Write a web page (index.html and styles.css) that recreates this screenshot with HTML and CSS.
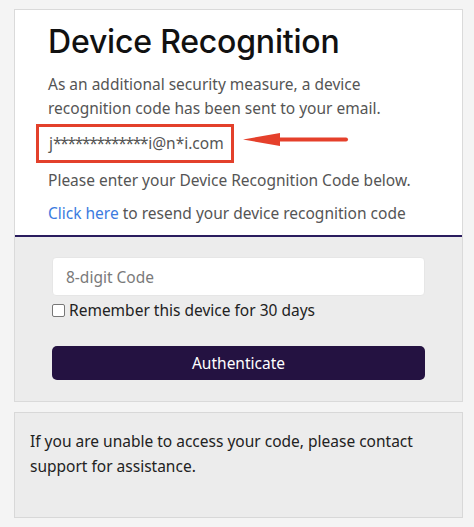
FILE: index.html
```html
<!DOCTYPE html>
<html lang="en">
<head>
<meta charset="utf-8">
<title>Device Recognition</title>
<link rel="stylesheet" href="styles.css">
</head>
<body>
<main class="page">
  <section class="card">
    <div class="card-top">
      <h1 class="title">Device Recognition</h1>
      <p class="text">As an additional security measure, a device recognition code has been sent to your email.</p>
      <div class="email-row">
        <div class="email-box">j<span class="stars">*************</span>i@n*i.com</div>
        <svg class="arrow" width="106" height="16" viewBox="0 0 106 16" aria-hidden="true">
          <path d="M0 7.5 L37 1 L37 14 Z" fill="#e5402b"/>
          <line x1="34" y1="7.5" x2="103" y2="7.5" stroke="#e5402b" stroke-width="4" stroke-linecap="round"/>
        </svg>
      </div>
      <p class="text">Please enter your Device Recognition Code below.</p>
      <p class="text resend"><a class="link" href="#">Click here</a> to resend your device recognition code</p>
    </div>
    <div class="card-bottom">
      <input class="code-input" type="text" placeholder="8-digit Code">
      <label class="remember"><span class="checkbox"></span>Remember this device for 30 days</label>
      <button class="btn" type="button">Authenticate</button>
    </div>
  </section>
  <section class="support">
    <p class="support-text">If you are unable to access your code, please contact support for assistance.</p>
  </section>
</main>
</body>
</html>
```

FILE: styles.css
```css
* { box-sizing: border-box; }
html, body { margin: 0; padding: 0; }
body {
  background: #f4f4f4;
  font-family: "Noto Sans", "Open Sans", sans-serif;
  width: 474px;
  height: 527px;
  overflow: hidden;
}
.page {
  padding: 9px 11px 0 14px;
}
.card {
  border: 1px solid #dadada;
  background: #fff;
}
.card-top {
  padding: 12px 20px 10px 33px;
}
.title {
  margin: 0 0 10px 0;
  font-family: Inter, "Noto Sans", sans-serif;
  font-size: 32px;
  font-weight: 500;
  color: #111;
  line-height: 40px;
  letter-spacing: -0.2px;
}
.text {
  margin: 0;
  font-size: 15.5px;
  line-height: 24px;
  color: #555;
}
.email-row {
  display: flex;
  align-items: center;
  margin: 4px 0 5px -12px;
}
.email-box {
  border: 3px solid #e3402b;
  padding: 4px 10px 5px 10px;
  width: 198px;
  font-size: 15.5px;
  line-height: 24px;
  color: #555;
  white-space: nowrap;
}
.stars { letter-spacing: -1.3px; margin-right: 1px; }
.arrow {
  margin-left: 9px;
  margin-top: -8px;
}
.resend { margin-top: 9px; }
.link { color: #3b7be0; text-decoration: none; }
.card-bottom {
  border-top: 2px solid #2a1c5e;
  background: #ececec;
  padding: 20px 37px 21px 37px;
  display: flex;
  flex-direction: column;
}
.code-input {
  height: 39px;
  border: 1px solid #e6e6e6;
  border-radius: 4px;
  background: #fff;
  padding: 0 13px;
  font-family: inherit;
  font-size: 15.5px;
  color: #333;
}
.code-input::placeholder { color: #7a7a7a; }
.remember {
  display: flex;
  align-items: center;
  margin-top: 3px;
  font-size: 15.5px;
  line-height: 22px;
  color: #222;
}
.checkbox {
  width: 13px;
  height: 13px;
  border: 1px solid #777;
  border-radius: 2px;
  background: #fff;
  margin-right: 4px;
}
.btn {
  margin-top: 25px;
  height: 34px;
  border: 0;
  border-radius: 5px;
  background: #241241;
  color: #fff;
  font-family: inherit;
  font-size: 15.5px;
}
.support {
  margin-top: 10px;
  border: 1px solid #d8d8d8;
  background: #ececec;
  height: 106px;
  padding: 16px 20px 0 15px;
}
.support-text {
  margin: 0;
  font-size: 15.5px;
  line-height: 25px;
  color: #222;
}
```
